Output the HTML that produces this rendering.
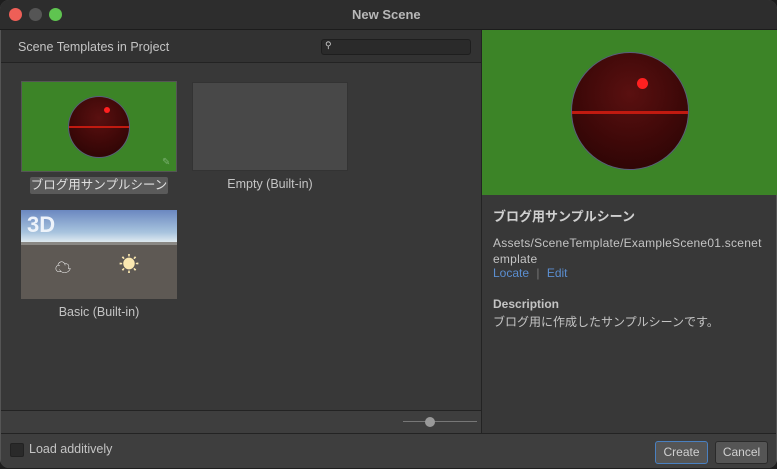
<!DOCTYPE html>
<html><head><meta charset="utf-8"><style>
*{margin:0;padding:0;box-sizing:border-box}
body{width:777px;height:469px;background:#1e1e1e;font-family:"Liberation Sans","Noto Sans CJK JP",sans-serif;font-size:12px;color:#c4c4c4;overflow:hidden;position:relative}
.win{position:absolute;left:0;top:0;width:777px;height:468px;background:#383838;border-radius:9px;overflow:hidden;box-shadow:inset 0 0 0 1px #555}
.abs{position:absolute}
.tb{left:0;top:0;width:777px;height:30px;background:#2d2d2d;border-bottom:1px solid #1c1c1c}
.dot{width:13px;height:13px;border-radius:50%;top:8px}
.hdr{left:1px;top:30px;width:480px;height:33px;background:#323232;border-bottom:1px solid #232323}
.right{left:481px;top:30px;width:295px;height:404px;background:#383838;border-left:1px solid #232323}
.ball{border-radius:50%;background:radial-gradient(circle at 50% 35%,#5a1010 0%,#3d0808 55%,#250404 100%);box-shadow:0 0 0 1px #5a5a80}
</style></head><body>
<div class="win">
<div class="abs tb"></div>
<div class="abs dot" style="left:9px;background:#ee5f57"></div>
<div class="abs dot" style="left:29px;background:#555"></div>
<div class="abs dot" style="left:49px;background:#5fc450"></div>
<div class="abs" style="left:352px;top:7px;font-weight:bold;font-size:13px;color:#b8b8b8">New Scene</div>
<div class="abs hdr"></div>
<div class="abs" style="left:18px;top:40px;font-size:12.5px;color:#c4c4c4">Scene Templates in Project</div>
<div class="abs" style="left:321px;top:39px;width:150px;height:16px;background:#2a2a2a;border:1px solid #1e1e1e;border-radius:3px"><span style="position:absolute;left:3px;top:0px;font-size:9px;color:#ccc">⚲</span></div>
<div class="abs" style="left:21px;top:81px;width:156px;height:91px;background:#3c8427;border:1px solid #555;overflow:hidden">
<div class="abs ball" style="left:47px;top:15px;width:60px;height:60px"></div>
<div class="abs" style="left:47px;top:44px;width:60px;height:2px;background:#c01a10"></div>
<div class="abs" style="left:82px;top:25px;width:6px;height:6px;border-radius:50%;background:#ff2020"></div>
<div class="abs" style="left:140px;top:75px;color:#7ab070;font-size:10px">✎</div>
</div>
<div class="abs" style="left:30px;top:177px;width:138px;height:17px;background:#5a5a5a;border-radius:2px;color:#e0e0e0;font-size:12.5px;text-align:center;line-height:17px">ブログ用サンプルシーン</div>
<div class="abs" style="left:192px;top:82px;width:156px;height:89px;background:#484848;border:1px solid #333"></div>
<div class="abs" style="left:192px;top:177px;width:156px;text-align:center;font-size:12.5px">Empty (Built-in)</div>
<div class="abs" style="left:21px;top:210px;width:156px;height:89px;background:#5e5954;overflow:hidden">
<div class="abs" style="left:0;top:0;width:156px;height:32px;background:linear-gradient(#6b88c0,#a8c4de 70%,#dfeaf0)"></div>
<div class="abs" style="left:0;top:32px;width:156px;height:3px;background:#8a8884"></div>
<div class="abs" style="left:6px;top:2px;font-size:22px;font-weight:bold;color:#eef3fa">3D</div>
<div class="abs" style="left:34px;top:44px;color:#fff;font-size:16px">☁</div>
<div class="abs" style="left:98px;top:38px;color:#fbe8b0;font-size:20px">☀</div>
</div>
<div class="abs" style="left:21px;top:305px;width:156px;text-align:center;font-size:12.5px">Basic (Built-in)</div>
<div class="abs right">
<div class="abs" style="left:0;top:0;width:295px;height:165px;background:#3c8427;overflow:hidden">
<div class="abs ball" style="left:90px;top:23px;width:116px;height:116px"></div>
<div class="abs" style="left:90px;top:81px;width:116px;height:3px;background:#c01a10"></div>
<div class="abs" style="left:155px;top:48px;width:11px;height:11px;border-radius:50%;background:#ff2020"></div>
</div>
<div class="abs" style="left:11px;top:176px;font-weight:bold;font-size:13px;color:#d0d0d0">ブログ用サンプルシーン</div>
<div class="abs" style="left:11px;top:205px;width:284px;line-height:16px;font-size:12px;letter-spacing:0.25px;white-space:nowrap">Assets/SceneTemplate/ExampleScene01.scenet<br>emplate</div>
<div class="abs" style="left:11px;top:236px;color:#5b8ed0">Locate <span style="color:#777;margin:0 4px">|</span> Edit</div>
<div class="abs" style="left:11px;top:267px;font-weight:bold">Description</div>
<div class="abs" style="left:11px;top:283px">ブログ用に作成したサンプルシーンです。</div>
</div>
<div class="abs" style="left:1px;top:410px;width:480px;height:24px;background:#3e3e3e;border-top:1px solid #232323"></div>
<div class="abs" style="left:403px;top:421px;width:74px;height:1px;background:#777"></div>
<div class="abs" style="left:425px;top:417px;width:10px;height:10px;border-radius:50%;background:#999"></div>
<div class="abs" style="left:1px;top:433px;width:775px;height:35px;background:#3e3e3e;border-top:1px solid #232323"></div>
<div class="abs" style="left:10px;top:443px;width:14px;height:14px;background:#2a2a2a;border:1px solid #222;border-radius:2px"></div>
<div class="abs" style="left:29px;top:442px;font-size:12.5px">Load additively</div>
<div class="abs" style="left:655px;top:441px;width:53px;height:23px;background:#555;border:1px solid #4a80c0;border-radius:3px;text-align:center;line-height:21px;color:#d0d0d0">Create</div>
<div class="abs" style="left:715px;top:441px;width:53px;height:23px;background:#555;border:1px solid #2a2a2a;border-radius:3px;text-align:center;line-height:21px;color:#d0d0d0">Cancel</div>
</div>
</body></html>
